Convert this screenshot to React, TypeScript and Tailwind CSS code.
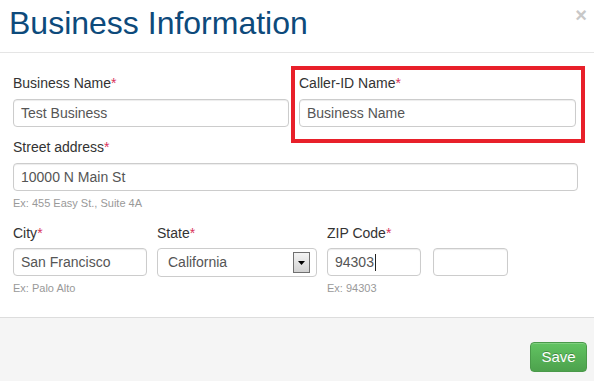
import React from "react";

const Label = ({ text, className = "" }: { text: string; className?: string }) => (
  <div className={"text-[14px] leading-[20px] text-[#333] " + className}>
    {text}
    <span className="text-[#d9335c]">*</span>
  </div>
);

const Input = ({
  value,
  className = "",
  children,
}: {
  value?: string;
  className?: string;
  children?: React.ReactNode;
}) => (
  <div
    className={
      "h-[28px] flex items-center px-[7px] bg-white border border-[#cccccc] rounded-[4px] shadow-[inset_0_1px_1px_rgba(0,0,0,0.075)] text-[14px] text-[#555] " +
      className
    }
  >
    {value}
    {children}
  </div>
);

const Help = ({ text }: { text: string }) => (
  <div className="mt-[5px] text-[11px] leading-[14px] text-[#999]">{text}</div>
);

export default function App() {
  return (
    <div className="h-[381px] w-[594px] flex flex-col bg-white overflow-hidden font-['Liberation_Sans',Arial,sans-serif]">
      {/* Header */}
      <div className="h-[53px] shrink-0 border-b border-[#e5e5e5] flex items-start">
        <h1 className="ml-[9px] mt-[7px] text-[32px] leading-none text-[#0d4a7b] font-normal">
          Business Information
        </h1>
        <span className="ml-auto mr-[7px] mt-[5px] text-[20px] leading-[20px] font-bold text-[#c8c8c8]">
          ×
        </span>
      </div>

      {/* Body */}
      <div className="flex-1 pl-[13px] pt-[20px]">
        {/* Row 1 */}
        <div className="flex">
          <div className="w-[276px]">
            <Label text="Business Name" />
            <Input value="Test Business" className="mt-[6px]" />
          </div>
          <div className="w-[277px] ml-[10px] relative">
            <Label text="Caller-ID Name" />
            <Input value="Business Name" className="mt-[6px]" />
            <div className="absolute left-[-8px] top-[-7px] w-[294px] h-[77px] border-4 border-[#e8202a]" />
          </div>
        </div>

        {/* Row 2 */}
        <div className="mt-[10px] w-[565px]">
          <Label text="Street address" />
          <Input value="10000 N Main St" className="mt-[6px]" />
          <Help text="Ex: 455 Easy St., Suite 4A" />
        </div>

        {/* Row 3 */}
        <div className="mt-[13px] flex">
          <div className="w-[134px]">
            <Label text="City" />
            <Input value="San Francisco" className="mt-[5px]" />
            <Help text="Ex: Palo Alto" />
          </div>
          <div className="w-[160px] ml-[10px]">
            <Label text="State" />
            <div className="mt-[5px] h-[29px] flex items-center bg-white border border-[#cccccc] rounded-[4px] text-[14px] text-[#555]">
              <span className="flex-1 pl-[10px]">California</span>
              <div className="w-[17px] h-[21px] mr-[6px] border border-[#707070] bg-linear-to-b from-[#f4f4f4] to-[#d2d2d2] flex items-center justify-center">
                <svg width="7" height="4" viewBox="0 0 7 4">
                  <path d="M0 0 H7 L3.5 4 Z" fill="#000" />
                </svg>
              </div>
            </div>
          </div>
          <div className="ml-[10px]">
            <Label text="ZIP Code" />
            <div className="mt-[5px] flex">
              <Input className="w-[94px] border-[#86acd0] shadow-[0_0_5px_rgba(82,168,236,0.45)]">
                94303
                <span className="ml-[1px] w-px h-[17px] bg-[#222]" />
              </Input>
              <Input className="w-[75px] ml-[12px]" />
            </div>
            <Help text="Ex: 94303" />
          </div>
        </div>
      </div>

      {/* Footer */}
      <div className="h-[64px] shrink-0 border-t border-[#dddddd] bg-[#f5f5f5] flex items-start">
        <button className="ml-auto mr-[7px] mt-[24px] w-[57px] h-[30px] rounded-[4px] border border-[#4a9a4a] bg-linear-to-b from-[#62c462] to-[#4da24d] text-white text-[15px] [text-shadow:0_-1px_0_rgba(0,0,0,0.25)] shadow-[inset_0_1px_0_rgba(255,255,255,0.2)]">
          Save
        </button>
      </div>
    </div>
  );
}
